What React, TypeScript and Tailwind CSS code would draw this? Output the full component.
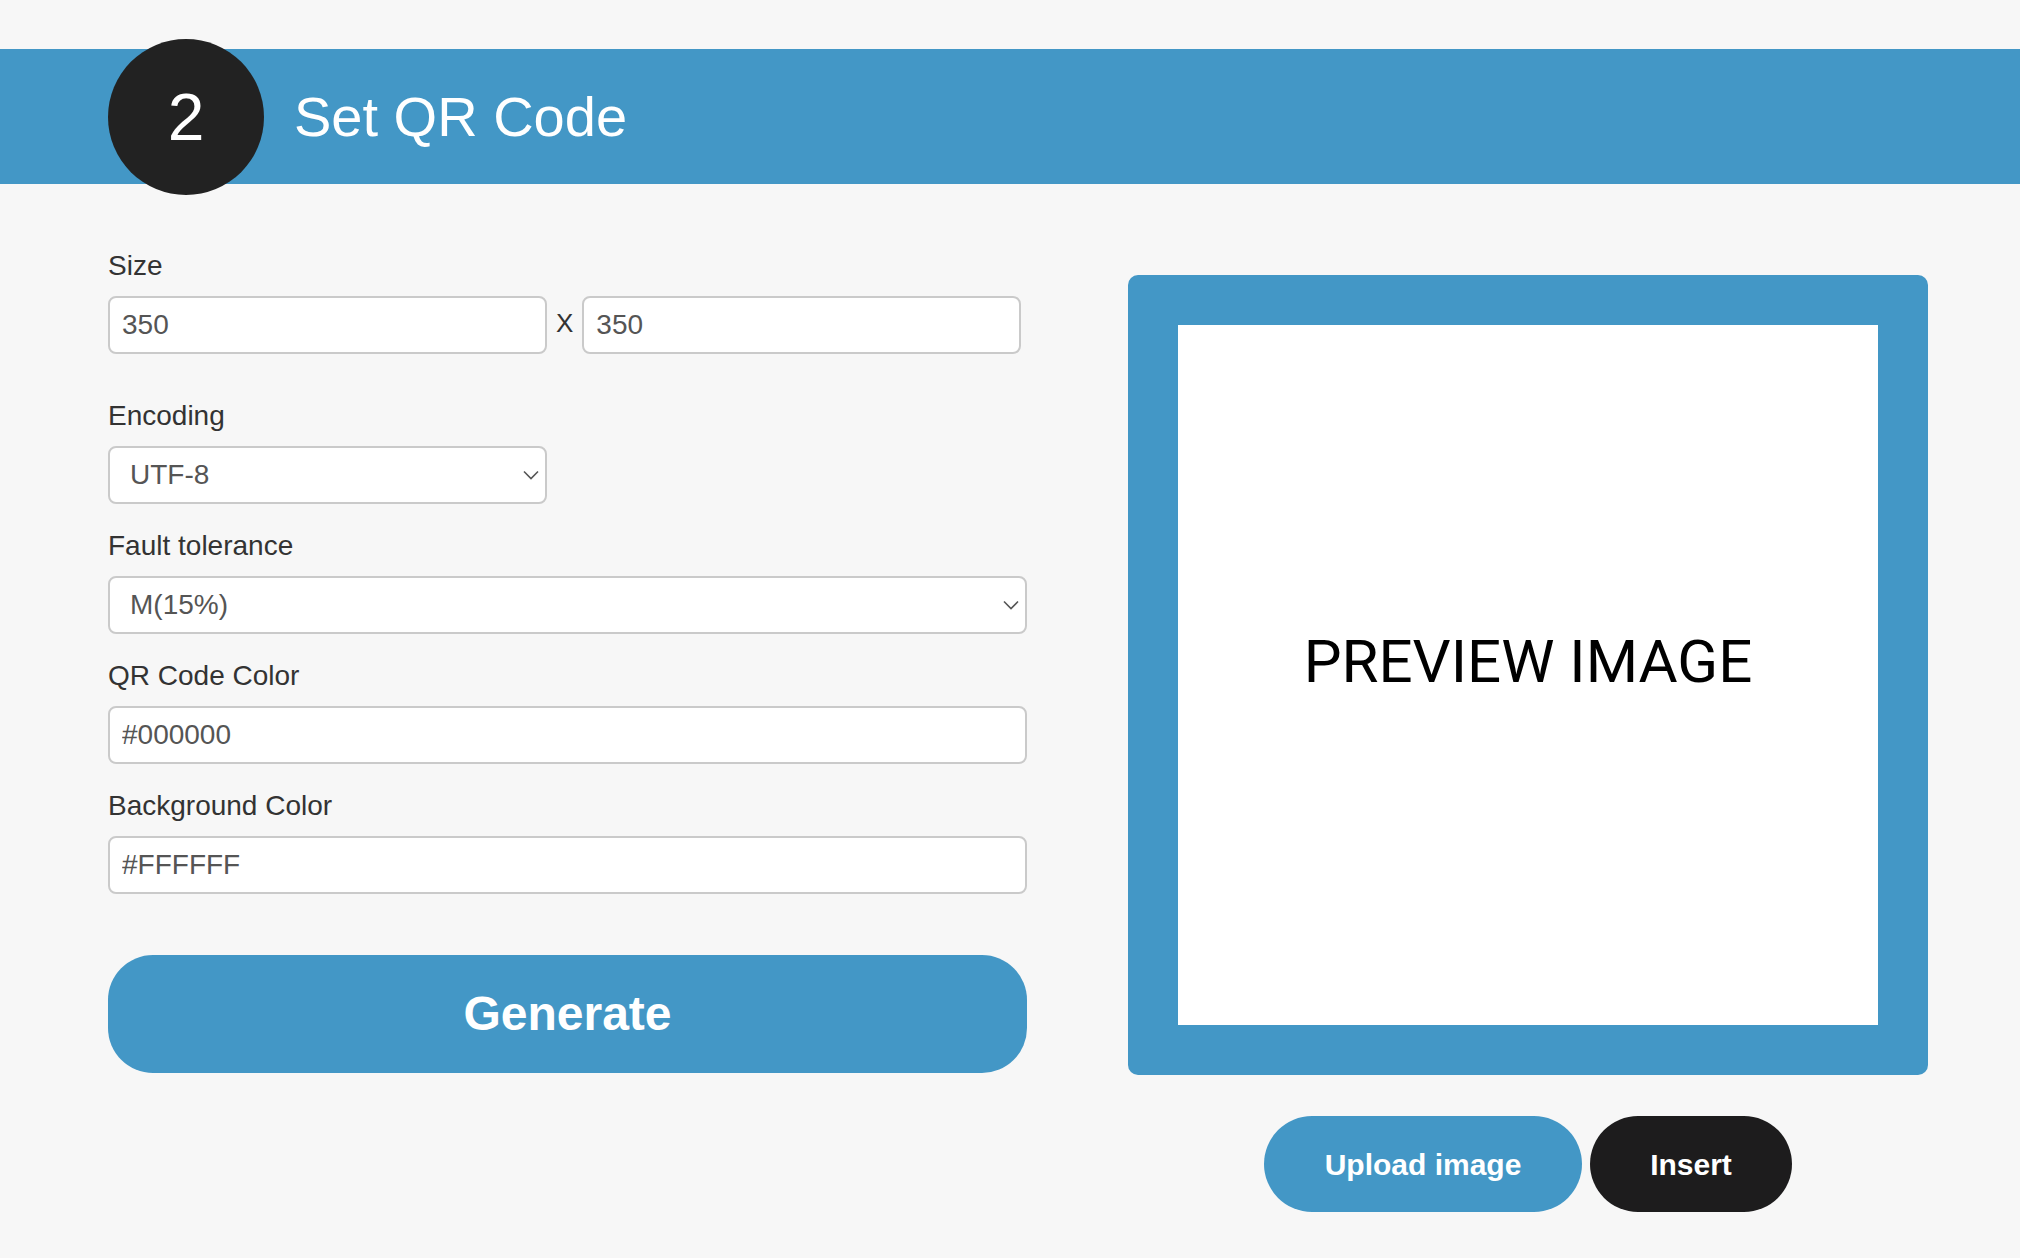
import type { ReactNode } from "react";

const blue = "bg-[#4397c6]";

function Label({ children }: { children: ReactNode }) {
  return (
    <label className="block h-[32px] text-[28px] leading-[32px] text-[#333]">
      {children}
    </label>
  );
}

function Chevron() {
  return (
    <svg
      width="16"
      height="10"
      viewBox="0 0 16 10"
      className="pointer-events-none absolute right-[8px] top-1/2 -translate-y-1/2"
    >
      <polyline
        points="1,1.5 8,8.5 15,1.5"
        fill="none"
        stroke="#555"
        strokeWidth="1.6"
      />
    </svg>
  );
}

function SelectBox({ value, options, width }: { value: string; options: string[]; width: string }) {
  return (
    <div className={"relative " + width}>
      <select
        defaultValue={value}
        className="h-[58px] w-full appearance-none rounded-[8px] border-2 border-[#cacaca] bg-white pl-[20px] text-[28px] text-[#555] outline-none"
      >
        {options.map((o) => (
          <option key={o} value={o}>
            {o}
          </option>
        ))}
      </select>
      <Chevron />
    </div>
  );
}

const inputCls =
  "h-[58px] rounded-[8px] border-2 border-[#cacaca] bg-white px-[12px] text-[28px] text-[#555] outline-none";

export default function App() {
  return (
    <div className="min-h-[1258px] bg-[#f7f7f7] pt-[49px] font-['Liberation_Sans',Arial,sans-serif]">
      {/* Step header */}
      <header className={"flex h-[135px] items-center pl-[108px] " + blue}>
        <div className="flex h-[156px] w-[156px] shrink-0 items-center justify-center rounded-full bg-[#222] text-[66px] leading-none text-white">
          2
        </div>
        <h1 className="ml-[30px] text-[56px] leading-none text-white">Set QR Code</h1>
      </header>

      <main className="flex pl-[108px] pt-[66px]">
        {/* Form */}
        <section className="w-[919px]">
          <div>
            <Label>Size</Label>
            <div className="mt-[14px] flex items-center">
              <input defaultValue="350" className={inputCls + " w-[439px]"} />
              <span className="mx-[9px] mb-[4px] text-[26px] leading-none text-[#333]">X</span>
              <input defaultValue="350" className={inputCls + " w-[439px]"} />
            </div>
          </div>

          <div className="mt-[46px]">
            <Label>Encoding</Label>
            <div className="mt-[14px]">
              <SelectBox value="UTF-8" options={["UTF-8", "Shift_JIS", "ISO-8859-1"]} width="w-[439px]" />
            </div>
          </div>

          <div className="mt-[26px]">
            <Label>Fault tolerance</Label>
            <div className="mt-[14px]">
              <SelectBox
                value="M(15%)"
                options={["L(7%)", "M(15%)", "Q(25%)", "H(30%)"]}
                width="w-full"
              />
            </div>
          </div>

          <div className="mt-[26px]">
            <Label>QR Code Color</Label>
            <input defaultValue="#000000" className={inputCls + " mt-[14px] w-full"} />
          </div>

          <div className="mt-[26px]">
            <Label>Background Color</Label>
            <input defaultValue="#FFFFFF" className={inputCls + " mt-[14px] w-full"} />
          </div>

          <button
            className={
              "mt-[61px] h-[118px] w-full rounded-[45px] text-[48px] font-bold text-white " + blue
            }
          >
            Generate
          </button>
        </section>

        {/* Preview */}
        <section className="ml-[101px] mt-[25px]">
          <div className={"h-[800px] w-[800px] rounded-[10px] p-[50px] " + blue}>
            <div className="flex h-full items-center justify-center bg-white pb-[26px]">
              <span className="font-['Roboto',sans-serif] text-[60px] leading-none text-black">
                PREVIEW IMAGE
              </span>
            </div>
          </div>
          <div className="mt-[41px] flex justify-center gap-[8px]">
            <button
              className={"h-[96px] w-[318px] rounded-full text-[30px] font-bold text-white " + blue}
            >
              Upload image
            </button>
            <button className="h-[96px] w-[202px] rounded-full bg-[#1d1c1d] text-[30px] font-bold text-white">
              Insert
            </button>
          </div>
        </section>
      </main>
    </div>
  );
}
